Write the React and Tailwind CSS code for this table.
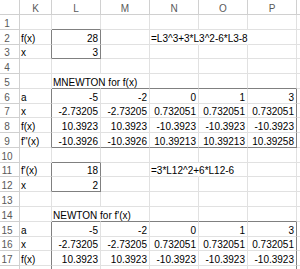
import React from 'react';

// sheet layout: K..P, rows 1..18 (row 18 only peeks in at the bottom)
const COLS = ['K', 'L', 'M', 'N', 'O', 'P'];
const COL_W = ['w-[32px]', 'w-[49px]', 'w-[49px]', 'w-[49px]', 'w-[49px]', 'w-[49px]'];
const ROW_H = [15, 15, 14, 15, 15, 15, 14, 15, 15, 15, 14, 15, 15, 15, 15, 14, 15, 15];

// outlined ranges: [row1, row2, col1, col2] with K = 1
const BOXES = [
  [2, 3, 2, 2],
  [6, 9, 2, 6],
  [11, 12, 2, 2],
  [15, 18, 2, 6],
];

// cells where text runs over into the next one, so the gridline is hidden
const SPILL = ['2-4', '2-5', '5-2', '11-4', '14-2'];

const DATA = {
  2: ['f(x)', '28', '', '=L3^3+3*L3^2-6*L3-8'],
  3: ['x', '3'],
  5: ['', 'MNEWTON for f(x)'],
  6: ['a', '-5', '-2', '0', '1', '3'],
  7: ['x', '-2.73205', '-2.73205', '0.732051', '0.732051', '0.732051'],
  8: ['f(x)', '10.3923', '10.3923', '-10.3923', '-10.3923', '-10.3923'],
  9: ["f''(x)", '-10.3926', '-10.3926', '10.39213', '10.39213', '10.39258'],
  11: ["f'(x)", '18', '', '=3*L12^2+6*L12-6'],
  12: ['x', '2'],
  14: ['', "NEWTON for f'(x)"],
  15: ['a', '-5', '-2', '0', '1', '3'],
  16: ['x', '-2.73205', '-2.73205', '0.732051', '0.732051', '0.732051'],
  17: ['f(x)', '10.3923', '10.3923', '-10.3923', '-10.3923', '-10.3923'],
};

const isNum = (v) => /^-?[\d.]+$/.test(v);

function darkRight(r, c) {
  return BOXES.some(([r1, r2, c1, c2]) => r >= r1 && r <= r2 && (c === c2 || c === c1 - 1));
}

function darkBottom(r, c) {
  return BOXES.some(([r1, r2, c1, c2]) => c >= c1 && c <= c2 && (r === r2 || r === r1 - 1));
}

function Cell({ r, c, value }) {
  const right = darkRight(r, c)
    ? 'border-r-[#808080]'
    : SPILL.includes(`${r}-${c}`)
    ? 'border-r-transparent'
    : 'border-r-[#e1e1e1]';
  const bottom = darkBottom(r, c) ? 'border-b-[#808080]' : 'border-b-[#e1e1e1]';
  const num = value && isNum(value);

  return (
    <div
      className={`${COL_W[c - 1]} shrink-0 flex items-end border-r border-b ${right} ${bottom} ${
        num ? 'justify-end pr-[2px]' : 'justify-start pl-[1px]'
      } whitespace-nowrap overflow-visible leading-[10px] text-black`}
    >
      {value}
    </div>
  );
}

export default function App() {
  return (
    <div
      className="w-[300px] h-[269px] overflow-hidden bg-white text-[10px]"
      style={{ fontFamily: '"Liberation Sans", Arial, sans-serif' }}
    >
      {/* column headers */}
      <div className="flex h-[15px]">
        <div className="w-[20px] shrink-0 border-r border-b border-[#d0d0d0]" />
        {COLS.map((col, i) => (
          <div
            key={col}
            className={`${COL_W[i]} shrink-0 flex items-end justify-center border-r border-b border-[#d0d0d0] leading-[10px] text-[#595959]`}
          >
            {col}
          </div>
        ))}
        <div className="flex-1 border-b border-[#d0d0d0]" />
      </div>

      {/* rows; the last one is only a sliver, so its number stays off */}
      {ROW_H.map((h, idx) => {
        const r = idx + 1;
        const vals = DATA[r] || [];
        return (
          <div key={r} className={`flex ${h === 15 ? 'h-[15px]' : 'h-[14px]'}`}>
            <div className="w-[20px] shrink-0 flex items-end justify-center pr-[5px] border-r border-b border-[#d0d0d0] leading-[10px] text-[#595959]">
              {r < ROW_H.length ? r : ''}
            </div>
            {COLS.map((col, i) => (
              <Cell key={col} r={r} c={i + 1} value={vals[i] || ''} />
            ))}
            <div className="flex-1 border-b border-[#e1e1e1]" />
          </div>
        );
      })}
    </div>
  );
}
